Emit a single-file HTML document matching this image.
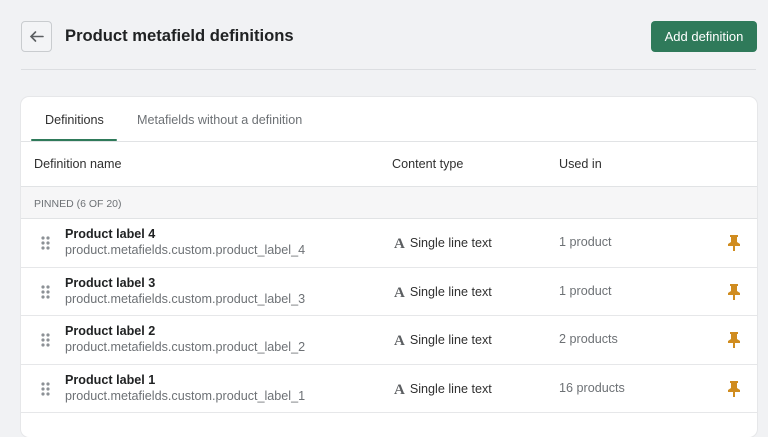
<!DOCTYPE html>
<html><head><meta charset="utf-8"><style>
*{box-sizing:border-box;margin:0;padding:0}
body{width:768px;height:421px;overflow:hidden;background:#f1f2f4;font-family:"Liberation Sans",sans-serif;color:#303030;position:relative}
.back{position:absolute;left:21px;top:21px;width:31px;height:31px;border:1px solid #c9cccf;border-radius:4px;background:#f3f4f6}
.title{position:absolute;left:65px;top:26px;font-size:16.6px;font-weight:bold;color:#202223}
.btn{position:absolute;left:651px;top:21px;width:106px;height:31px;background:#2f7a5a;border-radius:4px;color:#fff;font-size:13px;text-align:center;line-height:31px}
.div{position:absolute;left:21px;right:12px;top:69px;border-top:1px solid #dcdee1}
.card{position:absolute;left:21px;top:97px;width:736px;height:340px;background:#fff;border-radius:8px;overflow:hidden;box-shadow:0 0 0 1px #e6e7e9}
.tabs{height:45px;border-bottom:1px solid #e1e3e5;position:relative;font-size:12.6px}
.tab{position:absolute;top:16px}
.ul{position:absolute;left:10px;top:42px;width:86px;height:2px;background:#2f7a5a;border-radius:2px}
.hdr{height:45px;border-bottom:1px solid #e1e3e5;font-size:12.6px;position:relative}
.hdr span{position:absolute;top:15px}
.pin{height:32px;background:#f6f6f7;border-bottom:1px solid #e1e3e5;font-size:10.5px;color:#6d7175;padding:11px 0 0 13px}
.row{height:48.5px;border-bottom:1px solid #e6e7e9;position:relative;font-size:12.6px}
.n{position:absolute;left:44px;top:8px;font-weight:bold;color:#202223}
.k{position:absolute;left:44px;top:24px;color:#6d7175}
.c{position:absolute;top:16px}
.c b{font-family:"Liberation Serif",serif;font-size:15px;color:#5c5f62;margin-right:5px;position:relative;top:1px}
.u{position:absolute;left:538px;top:16px;color:#6d7175}
.g{position:absolute;left:20px;top:17px}
.pn{position:absolute;left:707px;top:16px}
</style></head><body>
<div class="back"><svg width="29" height="29" viewBox="0 0 29 29"><path d="M21 14.5H9M13.5 10L9 14.5L13.5 19" stroke="#5c5f62" stroke-width="1.6" fill="none" stroke-linecap="round"/></svg></div>
<div class="title">Product metafield definitions</div>
<div class="btn">Add definition</div>
<div class="div"></div>
<div class="card">
<div class="tabs"><span class="tab" style="left:24px;color:#303030">Definitions</span><span class="tab" style="left:116px;color:#6d7175">Metafields without a definition</span><div class="ul"></div></div>
<div class="hdr"><span style="left:13px">Definition name</span><span style="left:371px">Content type</span><span style="left:538px">Used in</span></div>
<div class="pin">PINNED (6 OF 20)</div>
<div class="row">
<svg class="g" width="10" height="14"><g fill="#8c9196"><circle cx="2" cy="2" r="1.6"/><circle cx="7" cy="2" r="1.6"/><circle cx="2" cy="7" r="1.6"/><circle cx="7" cy="7" r="1.6"/><circle cx="2" cy="12" r="1.6"/><circle cx="7" cy="12" r="1.6"/></g></svg>
<span class="n">Product label 4</span><span class="k">product.metafields.custom.product_label_4</span><span class="c" style="left:373px"><b>A</b>Single line text</span><span class="u">1 product</span>
<svg class="pn" width="12" height="16" viewBox="0 0 12 16"><path d="M2 0h8v2H9v5l3 2v2H7v5H5v-5H0V9l3-2V2H2z" fill="#d08c1f"/></svg></div>
<div class="row">
<svg class="g" width="10" height="14"><g fill="#8c9196"><circle cx="2" cy="2" r="1.6"/><circle cx="7" cy="2" r="1.6"/><circle cx="2" cy="7" r="1.6"/><circle cx="7" cy="7" r="1.6"/><circle cx="2" cy="12" r="1.6"/><circle cx="7" cy="12" r="1.6"/></g></svg>
<span class="n">Product label 3</span><span class="k">product.metafields.custom.product_label_3</span><span class="c" style="left:373px"><b>A</b>Single line text</span><span class="u">1 product</span>
<svg class="pn" width="12" height="16" viewBox="0 0 12 16"><path d="M2 0h8v2H9v5l3 2v2H7v5H5v-5H0V9l3-2V2H2z" fill="#d08c1f"/></svg></div>
<div class="row">
<svg class="g" width="10" height="14"><g fill="#8c9196"><circle cx="2" cy="2" r="1.6"/><circle cx="7" cy="2" r="1.6"/><circle cx="2" cy="7" r="1.6"/><circle cx="7" cy="7" r="1.6"/><circle cx="2" cy="12" r="1.6"/><circle cx="7" cy="12" r="1.6"/></g></svg>
<span class="n">Product label 2</span><span class="k">product.metafields.custom.product_label_2</span><span class="c" style="left:373px"><b>A</b>Single line text</span><span class="u">2 products</span>
<svg class="pn" width="12" height="16" viewBox="0 0 12 16"><path d="M2 0h8v2H9v5l3 2v2H7v5H5v-5H0V9l3-2V2H2z" fill="#d08c1f"/></svg></div>
<div class="row">
<svg class="g" width="10" height="14"><g fill="#8c9196"><circle cx="2" cy="2" r="1.6"/><circle cx="7" cy="2" r="1.6"/><circle cx="2" cy="7" r="1.6"/><circle cx="7" cy="7" r="1.6"/><circle cx="2" cy="12" r="1.6"/><circle cx="7" cy="12" r="1.6"/></g></svg>
<span class="n">Product label 1</span><span class="k">product.metafields.custom.product_label_1</span><span class="c" style="left:373px"><b>A</b>Single line text</span><span class="u">16 products</span>
<svg class="pn" width="12" height="16" viewBox="0 0 12 16"><path d="M2 0h8v2H9v5l3 2v2H7v5H5v-5H0V9l3-2V2H2z" fill="#d08c1f"/></svg></div>
</div>
</body></html>
